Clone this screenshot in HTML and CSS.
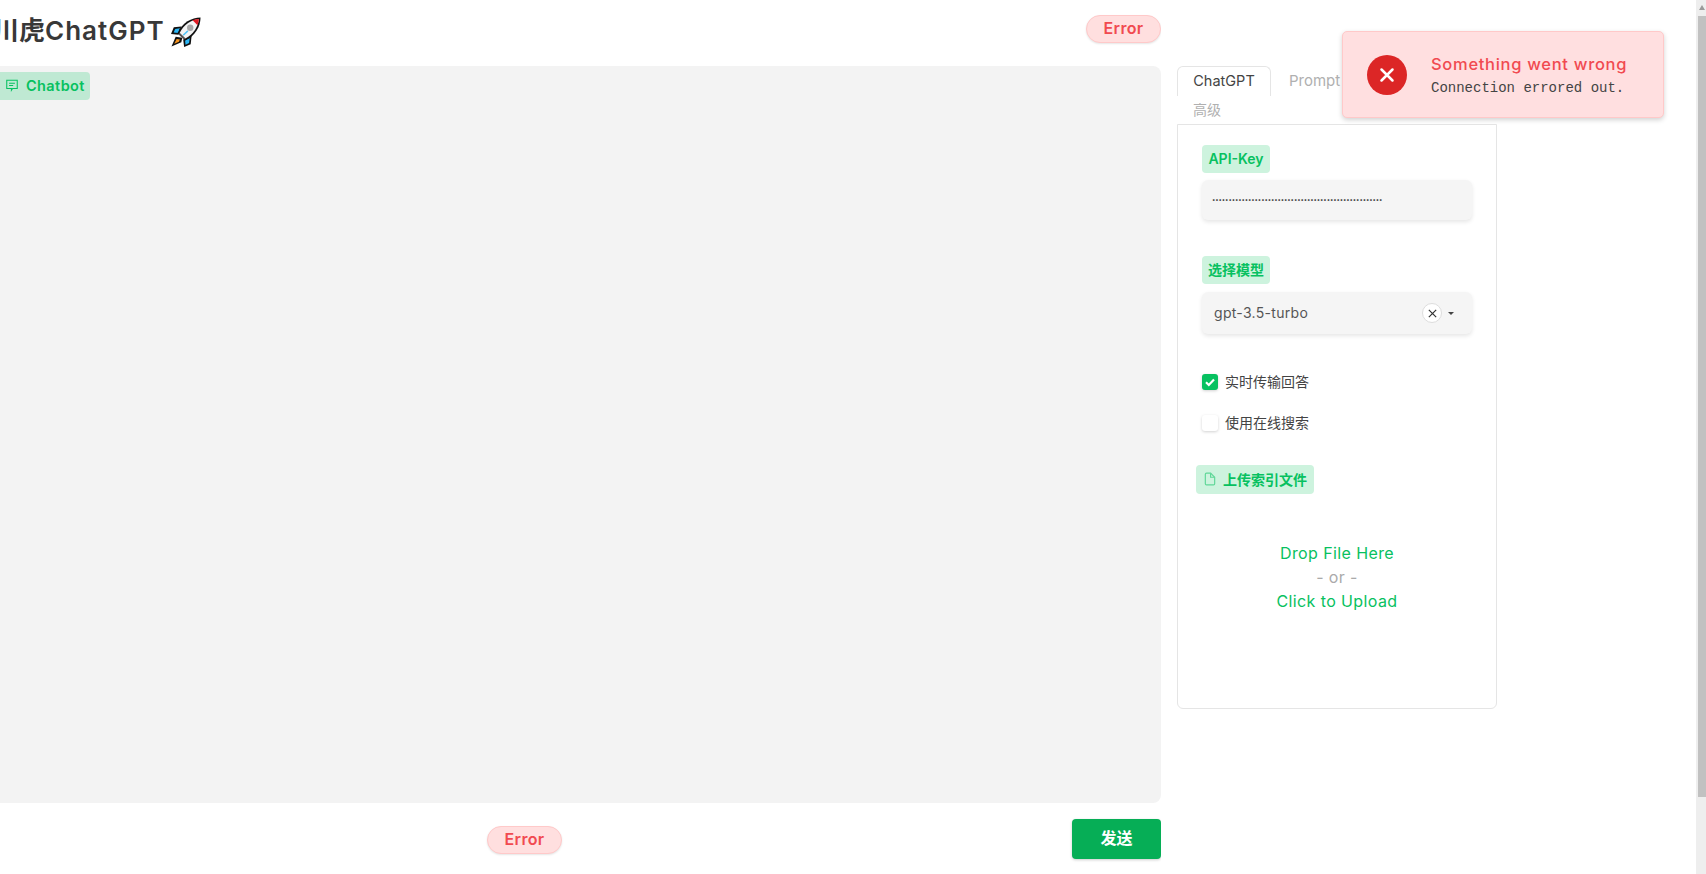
FILE: index.html
```html
<!DOCTYPE html>
<html lang="zh">
<head>
<meta charset="utf-8">
<title>川虎ChatGPT</title>
<link rel="stylesheet" href="styles.css">
</head>
<body>
<div class="page">
  <main class="content">
    <section class="left">
      <header class="head">
        <h1 class="title"><span>川虎<span class="title-latin">ChatGPT</span></span>
          <svg class="rocket" viewBox="0 0 32 32" aria-hidden="true">
            <path d="M5 21 L0.500 31.500 L11 27 L12 22 Z" fill="#111"/>
            <path d="M6 23.500 L3.500 28.500 L8.500 26.500 L9.500 24 Z" fill="#f7931e"/>
            <path d="M11 10 L3 11 L0 18 L8 19 Z" fill="#111"/>
            <path d="M22 20 L21 29 L14 32 L13 24 Z" fill="#111"/>
            <path d="M9.500 12 L4.500 12.800 L2.800 16.500 L8 17 Z" fill="#29b6f6"/>
            <path d="M20 22.500 L19.300 27.800 L15.500 29.500 L15 25 Z" fill="#29b6f6"/>
            <path d="M31.500 0.500 C22 0.500 12 6 7 17 L15 25 C26 20 31.500 10 31.500 0.500 Z" fill="#111"/>
            <path d="M29.800 2.200 C22 3 13.500 8 9.200 17 L15.300 23 C24 18.500 29 10 29.800 2.200 Z" fill="#f4f4f4"/>
            <path d="M23 3.400 C25.500 2.700 27.800 2.300 29.800 2.200 C29.600 4.400 29 6.800 28.300 8.700 Z" fill="#e01b24"/>
            <circle cx="20.500" cy="11.500" r="3.400" fill="#a8a8a8"/>
            <path d="M9.200 17 L15.300 23 L13.800 24 L8 18.500 Z" fill="#555"/>
            <path d="M13 19.500 L18 14.800" stroke="#4fc3f7" stroke-width="1.600"/>
          </svg>
        </h1>
        <span class="pill">Error</span>
      </header>
      <div class="chat">
        <span class="tag tag-chat">
          <svg class="tag-icon" viewBox="0 0 24 24" fill="none" stroke="currentColor" stroke-width="1.800" aria-hidden="true">
            <path d="M3 4h18v14h-8l-2 3v-3H3z"/>
            <path d="M7 9h10M7 13h7"/>
          </svg>
          Chatbot
        </span>
      </div>
      <footer class="foot">
        <div class="foot-input"><span class="pill">Error</span></div>
        <button class="send" type="button">发送</button>
      </footer>
    </section>

    <aside class="right">
      <nav class="tabs">
        <span class="tab tab-on">ChatGPT</span>
        <span class="tab">Prompt</span>
        <span class="tab tab-wrap">高级</span>
      </nav>
      <div class="panel">
        <span class="tag tag-field">API-Key</span>
        <div class="field field-key">••••••••••••••••••••••••••••••••••••••••••••••••••••</div>
        <span class="tag tag-field tag-model">选择模型</span>
        <div class="field field-select">
          <span class="model">gpt-3.5-turbo</span>
          <span class="clear">
            <svg viewBox="0 0 12 12" fill="none" stroke="#333" stroke-width="1.300" aria-hidden="true"><path d="M2 2l8 8M10 2l-8 8"/></svg>
          </span>
          <span class="caret"></span>
        </div>
        <label class="check check-first">
          <span class="box box-on">
            <svg viewBox="0 0 16 16" fill="none" stroke="#fff" stroke-width="2.200" aria-hidden="true"><path d="M4 8.300l2.800 2.700L12 5.500"/></svg>
          </span>
          <span class="check-text">实时传输回答</span>
        </label>
        <label class="check">
          <span class="box"></span>
          <span class="check-text">使用在线搜索</span>
        </label>
        <span class="tag tag-upload">
          <svg class="tag-icon file-icon" viewBox="0 0 24 24" fill="none" stroke="currentColor" stroke-width="2" aria-hidden="true">
            <path d="M13 2H6a2 2 0 0 0-2 2v16a2 2 0 0 0 2 2h12a2 2 0 0 0 2-2V9z"/>
            <path d="M13 2v7h7"/>
          </svg>
          上传索引文件
        </span>
        <div class="drop">
          <span class="drop-link">Drop File Here</span>
          <span class="drop-or">- or -</span>
          <span class="drop-link">Click to Upload</span>
        </div>
      </div>
    </aside>
  </main>

  <div class="scrollbar">
    <span class="scroll-up"></span>
    <span class="scroll-thumb"></span>
  </div>

  <div class="toast">
    <span class="toast-icon">
      <svg viewBox="0 0 16 16" fill="none" stroke="#fff" stroke-width="2.500" stroke-linecap="round" aria-hidden="true"><path d="M2.500 2.500l11 11M13.500 2.500l-11 11"/></svg>
    </span>
    <div class="toast-text">
      <div class="toast-title">Something went wrong</div>
      <div class="toast-msg">Connection errored out.</div>
    </div>
  </div>
</div>
</body>
</html>
```

FILE: styles.css
```css
* {
  box-sizing: border-box;
}

html,
body {
  margin: 0;
  height: 100%;
  overflow: hidden;
  background: #fff;
}

body {
  font-family: "Inter", "Noto Sans CJK SC", sans-serif;
  color: #333;
}

.page {
  position: relative;
  display: flex;
  height: 874px;
}

.content {
  flex: 1;
  display: flex;
  gap: 16px;
  min-width: 0;
}

/* left column */
.left {
  width: 1161px;
  display: flex;
  flex-direction: column;
  overflow: hidden;
}

.head {
  height: 66px;
  display: flex;
  justify-content: space-between;
  align-items: flex-start;
}

.title {
  margin: 14px 0 0 -7px;
  display: flex;
  align-items: center;
  gap: 6px;
  font-size: 26px;
  line-height: 34px;
  font-weight: 600;
  color: #383838;
}

.title-latin {
  letter-spacing: 1px;
}

.rocket {
  width: 30px;
  height: 30px;
  margin-top: 1px;
}

.head .pill {
  margin-top: 15px;
}

.pill {
  width: 75px;
  height: 28px;
  padding-bottom: 2px;
  display: flex;
  align-items: center;
  justify-content: center;
  border: 1px solid #ffc9c9;
  border-radius: 14px;
  background: #ffdfdf;
  box-shadow: 0 1px 2px rgba(0, 0, 0, 0.1);
  color: #f14a50;
  font-size: 16px;
  font-weight: 600;
  letter-spacing: 0.300px;
}

.chat {
  height: 737px;
  padding-top: 6px;
  background: #f3f3f3;
  border-radius: 0 8px 8px 0;
}

.foot {
  flex: 1;
  display: flex;
  justify-content: space-between;
  align-items: flex-start;
}

.foot-input {
  padding: 23px 0 0 487px;
}

.send {
  width: 89px;
  height: 40px;
  margin-top: 16px;
  padding: 0 0 5px;
  border: 0;
  border-radius: 4px;
  background: #06ae56;
  box-shadow: 0 1px 3px rgba(0, 0, 0, 0.2);
  color: #fff;
  font-family: inherit;
  font-size: 16px;
  font-weight: 600;
}

/* tags */
.tag {
  display: inline-flex;
  align-items: center;
  height: 28px;
  padding-bottom: 2px;
  border-radius: 4px;
  background: #cdf3de;
  color: #07c160;
  font-size: 14px;
  font-weight: 600;
  white-space: nowrap;
}

.tag-chat {
  width: 90px;
  padding-left: 5px;
  gap: 7px;
  background: #bfe9d3;
  border-radius: 0 4px 4px 0;
  font-size: 14.500px;
  letter-spacing: 0.400px;
}

.tag-icon {
  width: 14px;
  height: 14px;
  flex: none;
}

.tag-field {
  display: flex;
  width: 68px;
  justify-content: center;
}

.tag-model {
  margin-top: 36px;
}

.tag-upload {
  display: flex;
  width: 118px;
  height: 29px;
  margin: 34px 0 0 -6px;
  padding-left: 7px;
  gap: 6px;
}

.file-icon {
  opacity: 0.55;
}

/* right column */
.right {
  width: 320px;
  padding-top: 66px;
}

.tabs {
  display: flex;
  flex-wrap: wrap;
  width: 190px;
}

.tab {
  height: 30px;
  padding: 0 0 2px 18px;
  display: flex;
  align-items: center;
  font-size: 15px;
  color: #b0b0b0;
}

.tab-on {
  width: 94px;
  justify-content: center;
  padding: 0 0 2px;
  font-size: 14.500px;
  font-weight: 400;
  color: #444;
  border: 1px solid #e5e5e5;
  border-bottom: 0;
  border-radius: 6px 6px 0 0;
  background: #fff;
}

.tab-wrap {
  width: 100%;
  height: 28px;
  padding-left: 16px;
  font-size: 14px;
}

.panel {
  height: 585px;
  padding: 20px 24px 0;
  border: 1px solid #e5e5e5;
  border-radius: 0 0 6px 6px;
}

.field {
  height: 40px;
  margin-top: 7px;
  display: flex;
  align-items: center;
  width: 270px;
  background: #f5f5f5;
  border-radius: 6px;
  box-shadow: 0 2px 4px rgba(0, 0, 0, 0.1);
  font-size: 14px;
}

.field-key {
  padding: 0 0 2px 10px;
  font-size: 6px;
  letter-spacing: -0.100px;
  overflow: hidden;
  white-space: nowrap;
  color: #333;
}

.field-select {
  height: 42px;
  margin-top: 8px;
  padding-left: 12px;
  color: #555;
}

.model {
  flex: 1;
  padding-bottom: 2px;
  letter-spacing: 0.300px;
}

.clear {
  width: 20px;
  height: 20px;
  display: flex;
  align-items: center;
  justify-content: center;
  border: 1px solid #ddd;
  border-radius: 50%;
  background: #fff;
}

.clear svg {
  width: 11px;
  height: 11px;
}

.caret {
  width: 0;
  height: 0;
  margin: 0 18px 0 6px;
  border-left: 3px solid transparent;
  border-right: 3px solid transparent;
  border-top: 3px solid #444;
}

.check {
  display: flex;
  align-items: center;
  gap: 7px;
  height: 16px;
  margin-top: 25px;
  font-size: 14px;
  color: #444;
}

.check-first {
  margin-top: 40px;
}

.check-text {
  padding-bottom: 2px;
}

.box {
  width: 16px;
  height: 16px;
  flex: none;
  border-radius: 3px;
  background: #fff;
  box-shadow: 0 1px 3px rgba(0, 0, 0, 0.18);
}

.box-on {
  background: #07c160;
}

.box svg {
  display: block;
}

.drop {
  margin-top: 47px;
  width: 270px;
  display: flex;
  flex-direction: column;
  align-items: center;
  font-size: 16px;
  letter-spacing: 0.400px;
  line-height: 24px;
}

.drop-link {
  color: #07c160;
}

.drop-or {
  color: #aaa;
}

/* scrollbar */
.scrollbar {
  width: 10px;
  flex: none;
  background: #eee;
  display: flex;
  flex-direction: column;
  align-items: flex-end;
}

.scroll-up {
  width: 0;
  height: 0;
  margin: 5px 1px 6px 0;
  border-left: 3.500px solid transparent;
  border-right: 3.500px solid transparent;
  border-bottom: 5px solid #9a9a9a;
}

.scroll-thumb {
  width: 8px;
  height: 781px;
  background: #c1c1c1;
}

/* toast */
.toast {
  position: absolute;
  left: 1342px;
  top: 31px;
  width: 322px;
  height: 87px;
  display: flex;
  align-items: center;
  gap: 24px;
  padding-left: 24px;
  background: #ffdfe0;
  border: 1px solid #ffc9c9;
  border-radius: 5px;
  box-shadow: 0 2px 5px rgba(0, 0, 0, 0.18);
}

.toast-icon {
  width: 40px;
  height: 40px;
  flex: none;
  display: flex;
  align-items: center;
  justify-content: center;
  border-radius: 50%;
  background: #dc2626;
}

.toast-icon svg {
  width: 16px;
  height: 16px;
}

.toast-title {
  font-size: 16.500px;
  font-weight: 500;
  line-height: 20px;
  letter-spacing: 0.700px;
  color: #f14a50;
}

.toast-msg {
  margin-top: 6px;
  font-family: "Liberation Mono", monospace;
  font-size: 14px;
  line-height: 16px;
  color: #444;
}
```
